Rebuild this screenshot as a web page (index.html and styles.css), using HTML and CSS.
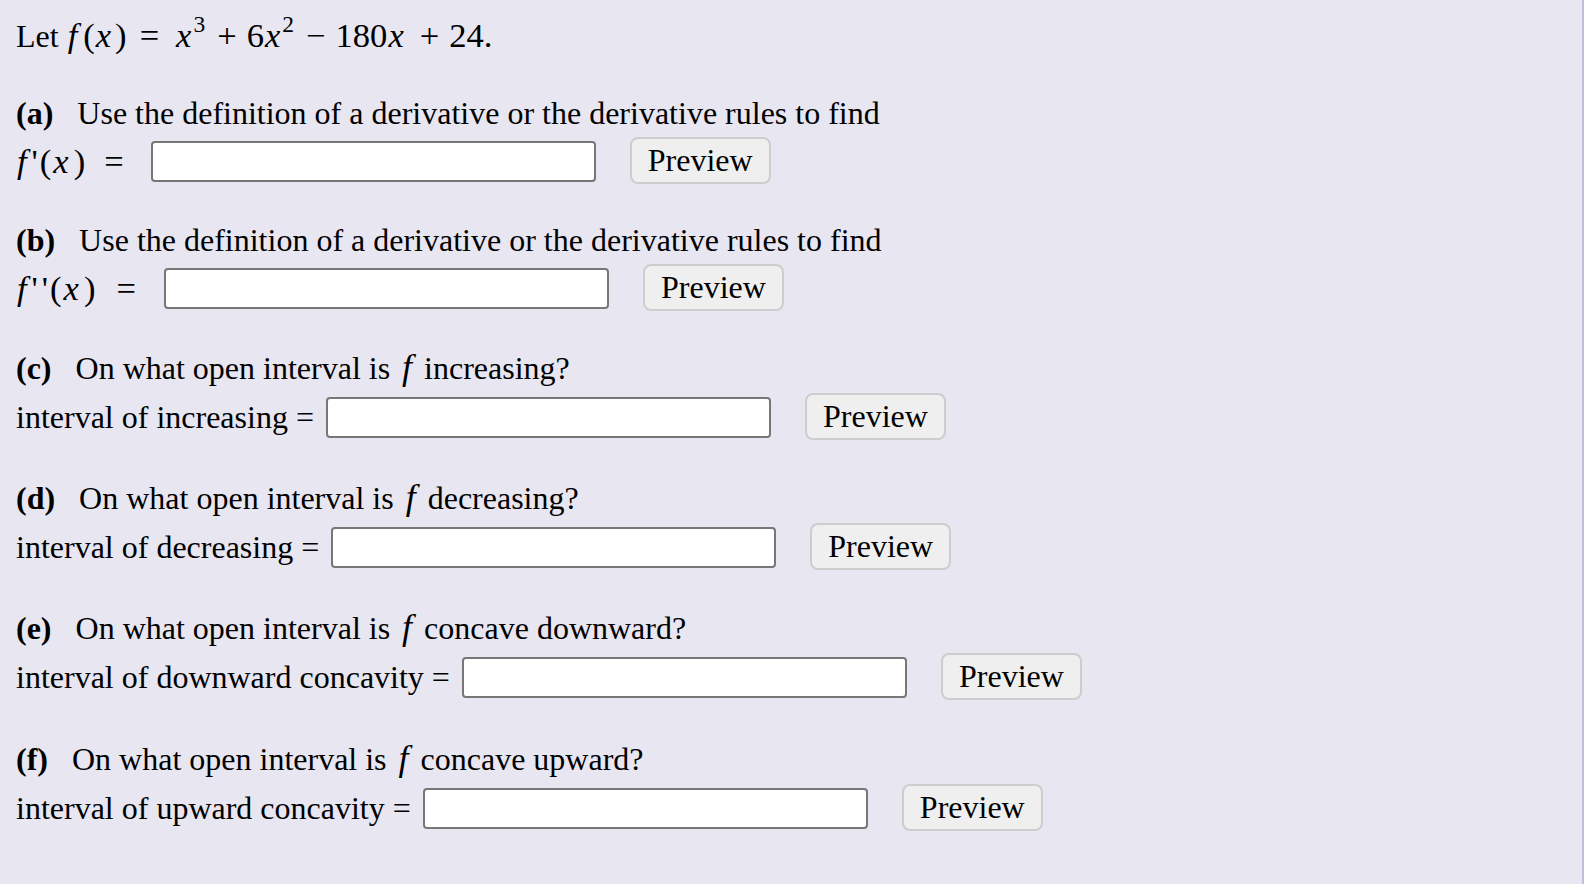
FILE: index.html
```html
<!DOCTYPE html>
<html>
<head>
<meta charset="utf-8">
<link rel="stylesheet" href="styles.css">
</head>
<body>
<div class="page">
  <div class="intro">Let <span class="m"><i class="mf">f</i>(<i class="mx">x</i>)<span class="rel">=</span><i class="xs">x</i><sup>3</sup><span class="bin">+</span>6<i class="xs">x</i><sup>2</sup><span class="bin">−</span>180<i class="xe">x</i><span class="bin">+</span>24.</span></div>

  <div class="part part-ab">
    <div class="q"><b class="tag">(a)</b>Use the definition of a derivative or the derivative rules to find</div>
    <div class="row">
      <span class="lbl m lbl-a"><i class="mf">f</i><span class="pr">'</span>(<i class="mx">x</i>)<span class="rel">=</span></span>
      <input class="ans" type="text">
      <button class="pv">Preview</button>
    </div>
  </div>

  <div class="part part-ab part-b">
    <div class="q"><b class="tag">(b)</b>Use the definition of a derivative or the derivative rules to find</div>
    <div class="row">
      <span class="lbl m lbl-b"><i class="mf">f</i><span class="pr">'</span><span class="pr">'</span>(<i class="mx">x</i>)<span class="rel">=</span></span>
      <input class="ans" type="text">
      <button class="pv">Preview</button>
    </div>
  </div>

  <div class="part part-c">
    <div class="q"><b class="tag">(c)</b>On what open interval is <i class="fi">f</i>increasing?</div>
    <div class="row">
      <span class="lbl">interval of increasing =</span>
      <input class="ans" type="text">
      <button class="pv">Preview</button>
    </div>
  </div>

  <div class="part">
    <div class="q"><b class="tag">(d)</b>On what open interval is <i class="fi">f</i>decreasing?</div>
    <div class="row">
      <span class="lbl">interval of decreasing =</span>
      <input class="ans" type="text">
      <button class="pv">Preview</button>
    </div>
  </div>

  <div class="part">
    <div class="q"><b class="tag">(e)</b>On what open interval is <i class="fi">f</i>concave downward?</div>
    <div class="row">
      <span class="lbl">interval of downward concavity =</span>
      <input class="ans" type="text">
      <button class="pv">Preview</button>
    </div>
  </div>

  <div class="part">
    <div class="q"><b class="tag">(f)</b>On what open interval is <i class="fi">f</i>concave upward?</div>
    <div class="row">
      <span class="lbl">interval of upward concavity =</span>
      <input class="ans" type="text">
      <button class="pv">Preview</button>
    </div>
  </div>
</div>
</body>
</html>
```

FILE: styles.css
```css
html, body {
  margin: 0;
  padding: 0;
  height: 100%;
}
body {
  background: #e8e6f1;
  border-right: 2px solid #c1bfdd;
  box-sizing: border-box;
  font-family: "Liberation Serif", "Times New Roman", serif;
  font-size: 32px;
  color: #000;
  overflow: hidden;
}
.page {
  padding: 17px 16px 0 16px;
  display: flex;
  flex-direction: column;
  gap: 39.1px;
}
.intro {
  line-height: 37px;
  height: 37px;
  white-space: nowrap;
}
.m {
  font-size: 1.08em;
}
.m i {
  font-style: italic;
}
.m .mf {
  margin: 0 6px 0 1px;
}
.m .mx {
  margin: 0 4px 0 1px;
}
.m .xs {
  margin: 0 1px 0 1px;
}
.m .xe {
  margin: 0 5px 0 1px;
}
.m sup {
  font-size: 0.68em;
  line-height: 0;
  vertical-align: 0.62em;
  margin: 0 1px 0 1px;
}
.rel {
  margin: 0 16px 0 13px;
}
.bin {
  margin: 0 10px 0 11px;
}
.part {
  display: flex;
  flex-direction: column;
}
.part-ab .q {
  margin-top: 2px;
}
.part-ab .row {
  margin-top: 6px;
}
.part-b {
  margin-top: -4px;
}
.part-c {
  margin-top: -1px;
}
.q {
  line-height: 37px;
  height: 37px;
  white-space: nowrap;
}
.tag {
  font-weight: bold;
  margin-right: 24px;
}
.fi {
  font-style: italic;
  font-size: 1.12em;
  line-height: 0;
  margin: 0 12px 0 4px;
}
.row {
  margin-top: 7px;
  height: 47px;
  display: flex;
  align-items: center;
  white-space: nowrap;
}
.lbl {
  line-height: 37px;
  margin-right: 12px;
}
.lbl-a .mf, .lbl-b .mf {
  margin: 0 3px 0 1px;
}
.lbl-a .mx, .lbl-b .mx {
  margin: 0 5px 0 2px;
}
.lbl-a .rel {
  margin: 0 0 0 19px;
}
.lbl-a {
  margin-right: 27px;
}
.lbl-b .rel {
  margin: 0 0 0 21px;
}
.lbl-b {
  margin-right: 28px;
}
.pr {
  margin: 0 2px 0 2px;
}
.ans {
  width: 445px;
  height: 41px;
  box-sizing: border-box;
  border: 2px solid #777777;
  border-radius: 4px;
  background: #ffffff;
  padding: 0 6px;
  margin: 0;
  font: inherit;
  font-size: 32px;
}
.pv {
  margin-left: 34px;
  margin-bottom: 2px;
  width: 141px;
  height: 47px;
  box-sizing: border-box;
  border: 2px solid #cdcdcd;
  border-radius: 8px;
  background: #efefef;
  font-family: "Liberation Serif", "Times New Roman", serif;
  font-size: 32px;
  color: #000;
  padding: 0;
}
```
